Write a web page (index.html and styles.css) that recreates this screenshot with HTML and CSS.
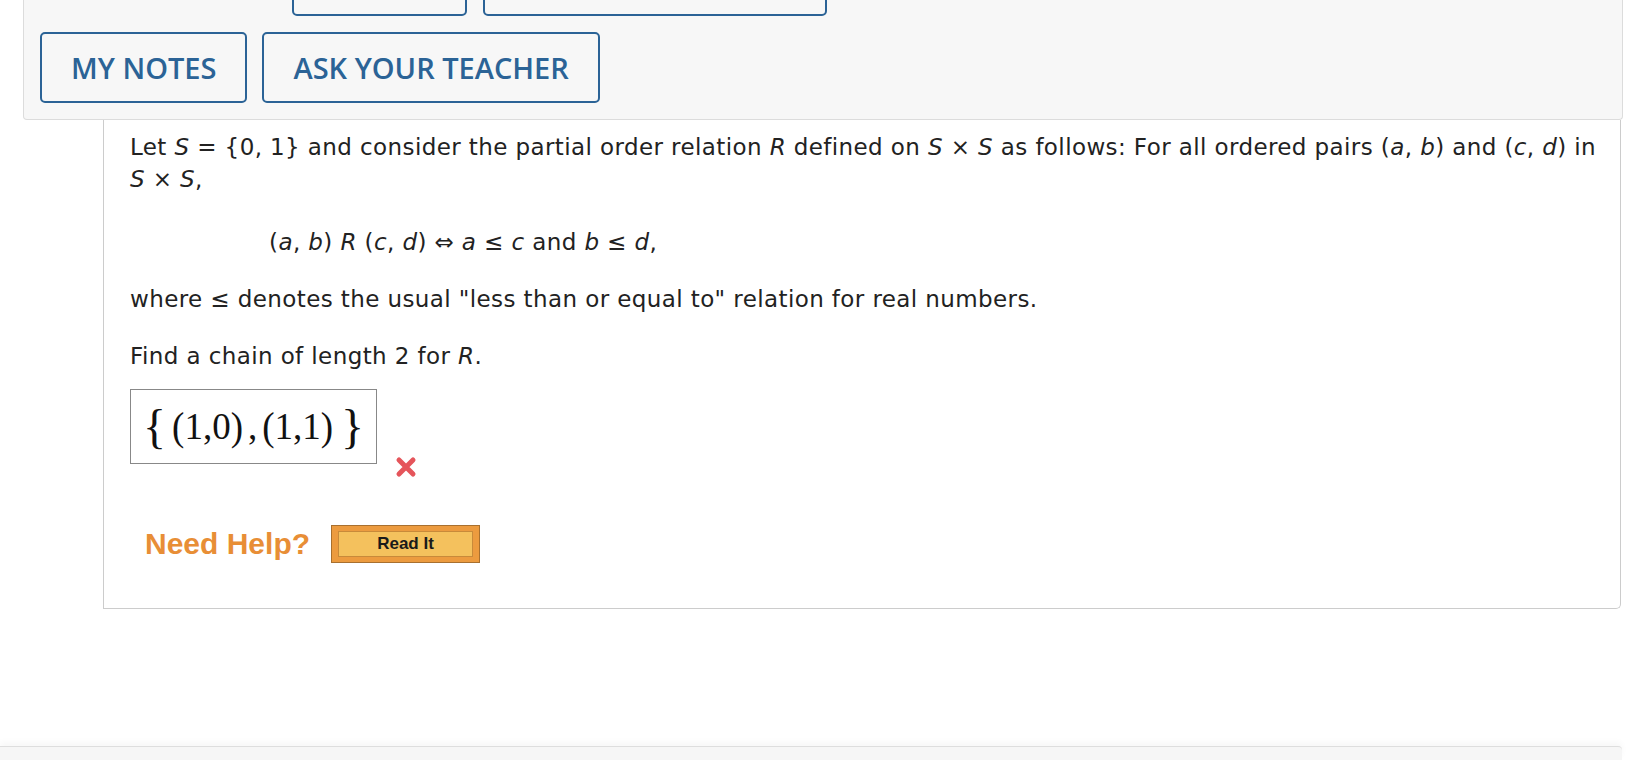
FILE: index.html
```html
<!DOCTYPE html>
<html lang="en">
<head>
<meta charset="utf-8">
<title>Question</title>
<link rel="stylesheet" href="styles.css">
</head>
<body>
<div class="page">
  <div class="panel">
    <div class="btn-row btn-row-top">
      <span class="btn btn-a"></span>
      <span class="btn btn-b"></span>
    </div>
    <div class="btn-row">
      <button class="btn">MY NOTES</button>
      <button class="btn">ASK YOUR TEACHER</button>
    </div>
  </div>
  <div class="question">
    <p class="para">Let <i>S</i> = {0, 1} and consider the partial order relation <i>R</i> defined on <i>S</i> × <i>S</i> as follows: For all ordered pairs (<i>a</i>, <i>b</i>) and (<i>c</i>, <i>d</i>) in <i>S</i> × <i>S</i>,</p>
    <p class="formula">(<i>a</i>, <i>b</i>) <i>R</i> (<i>c</i>, <i>d</i>) ⇔ <i>a</i> ≤ <i>c</i> and <i>b</i> ≤ <i>d</i>,</p>
    <p class="para">where ≤ denotes the usual "less than or equal to" relation for real numbers.</p>
    <p class="para">Find a chain of length 2 for <i>R</i>.</p>
    <div class="answer-row">
      <div class="answer"><span class="brace brace-l">{</span><span class="pn">(</span>1,0<span class="pn">)</span><span class="sep">,</span><span class="pn">(</span>1,1<span class="pn">)</span><span class="brace brace-r">}</span></div>
      <svg class="wrong" width="24" height="24" viewBox="0 0 24 24"><path d="M5 5 L19 19 M19 5 L5 19" stroke="#e5555b" stroke-width="5" stroke-linecap="round"/></svg>
    </div>
    <div class="help-row">
      <span class="need-help">Need Help?</span>
      <span class="read-it"><span class="read-it-inner">Read It</span></span>
    </div>
  </div>
  <div class="bottom-bar"></div>
</div>
</body>
</html>
```

FILE: styles.css
```css
html, body {
  margin: 0;
  padding: 0;
  background: #ffffff;
}
.page {
  width: 1636px;
  height: 760px;
  overflow: hidden;
  display: flex;
  flex-direction: column;
}
.panel {
  margin-left: 23px;
  width: 1598px;
  height: 119px;
  background: #f7f7f7;
  border: 1px solid #dcdcdc;
  border-top: none;
  border-radius: 0 0 4px 4px;
  display: flex;
  flex-direction: column;
  flex: none;
}
.btn-row {
  display: flex;
  gap: 15px;
  padding-left: 16px;
  margin-top: 16px;
}
.btn-row-top {
  margin-top: -55px;
  padding-left: 268px;
  gap: 16px;
}
.btn {
  box-sizing: border-box;
  height: 71px;
  border: 2px solid #2b6396;
  border-radius: 5px;
  background: transparent;
  color: #2b6396;
  font-family: "Open Sans", sans-serif;
  font-weight: 600;
  font-size: 29px;
  padding: 0 29px;
  display: flex;
  align-items: center;
  justify-content: center;
}
.btn-a { width: 175px; }
.btn-b { width: 344px; }
.question {
  margin-left: 103px;
  width: 1518px;
  height: 489px;
  border: 1px solid #cccccc;
  border-top: none;
  border-radius: 0 0 5px 0;
  padding: 11px 17px 0 26px;
  box-sizing: border-box;
  font-family: "DejaVu Sans", Verdana, sans-serif;
  font-size: 23px;
  letter-spacing: 0.4px;
  line-height: 32px;
  color: #222;
  flex: none;
}
.para {
  margin: 0 0 25px 0;
}
.formula {
  margin: 31px 0 25px 139px;
}
.answer-row {
  display: flex;
  align-items: flex-end;
  gap: 17px;
  margin-top: -8px;
}
.answer {
  box-sizing: border-box;
  width: 247px;
  height: 75px;
  border: 1px solid #888888;
  display: flex;
  align-items: center;
  padding-left: 12px;
  font-family: "Liberation Serif", "Times New Roman", serif;
  font-size: 37px;
  line-height: 40px;
  letter-spacing: 0;
  color: #111;
}
.brace {
  font-size: 48px;
  line-height: 48px;
}
.brace-l { margin-right: 6px; }
.brace-r { margin-left: 8px; }
.sep { margin: 0 5px; }
.pn {
  display: inline-block;
  transform: scaleY(1.06);
}
.wrong {
  margin-bottom: -15px;
  flex: none;
}
.help-row {
  display: flex;
  align-items: center;
  gap: 21px;
  margin-top: 61px;
  padding-left: 15px;
  letter-spacing: 0;
}
.need-help {
  font-family: "Liberation Sans", Arial, sans-serif;
  font-weight: bold;
  font-size: 30px;
  color: #e88e36;
}
.read-it {
  box-sizing: border-box;
  width: 149px;
  height: 38px;
  border: 1px solid #a8702f;
  background: #ec9b3f;
  padding: 5px 6px;
  display: flex;
}
.read-it-inner {
  flex: 1;
  border: 1px solid #c88a3a;
  background: #f4c15d;
  font-family: "Liberation Sans", Arial, sans-serif;
  font-weight: bold;
  font-size: 17px;
  color: #1a1a1a;
  display: flex;
  align-items: center;
  justify-content: center;
}
.bottom-bar {
  margin-top: auto;
  width: 1622px;
  height: 13px;
  background: #f6f6f6;
  border-top: 1px solid #dedede;
  border-radius: 0 4px 0 0;
  box-shadow: 0 -4px 6px rgba(0,0,0,0.03);
  flex: none;
}
```
